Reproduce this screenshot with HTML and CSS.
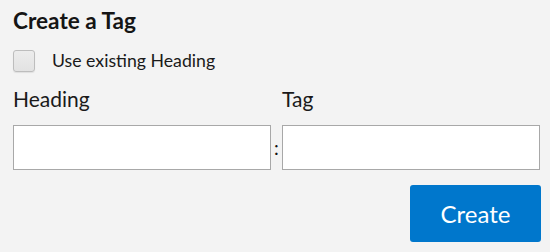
FILE: index.html
```html
<!DOCTYPE html>
<html>
<head>
<meta charset="utf-8">
<link rel="stylesheet" href="styles.css">
</head>
<body>
<div class="panel">
  <h2 class="title">Create a Tag</h2>
  <label class="check-row">
    <span class="checkbox"></span>
    <span class="check-label">Use existing Heading</span>
  </label>
  <div class="fields">
    <span class="field-label">Heading</span>
    <span></span>
    <span class="field-label">Tag</span>
    <span class="text-input"></span>
    <span class="colon">:</span>
    <span class="text-input"></span>
  </div>
  <div class="actions">
    <button class="create-btn">Create</button>
  </div>
</div>
</body>
</html>
```
FILE: styles.css
```css
html, body {
  margin: 0;
  padding: 0;
  background: #f3f3f3;
}
* {
  box-sizing: border-box;
}
body {
  font-family: Lato, "Open Sans", sans-serif;
  color: #111;
}
.panel {
  width: 540px;
  padding: 7px 0 0 13px;
}
.title {
  margin: 0;
  font-size: 22.6px;
  font-weight: 700;
  line-height: 28px;
  color: #151515;
}
.check-row {
  display: flex;
  align-items: center;
  margin-top: 15px;
  height: 22px;
}
.checkbox {
  width: 22px;
  height: 22px;
  border: 1px solid #bdbdbd;
  border-radius: 3px;
  background: linear-gradient(#ececec, #e2e2e2);
  box-shadow: 0 1px 1px rgba(0,0,0,0.08);
}
.check-label {
  margin-left: 17px;
  font-size: 17.7px;
  line-height: 22px;
  color: #1a1a1a;
}
.fields {
  display: grid;
  grid-template-columns: 258px 11px 258px;
  margin-top: 15px;
}
.field-label {
  font-size: 21px;
  line-height: 24px;
  height: 38px;
  color: #1a1a1a;
}
.text-input {
  display: block;
  height: 45px;
  border: 1px solid #a8a8a8;
  background: #fff;
}
.colon {
  display: flex;
  align-items: center;
  justify-content: center;
  font-size: 19px;
  color: #111;
}
.actions {
  display: flex;
  justify-content: flex-end;
  margin-top: 15px;
  margin-right: -1px;
}
.create-btn {
  width: 131px;
  height: 57px;
  border: none;
  border-radius: 3px;
  background: #0077cc;
  color: #fff;
  font-family: Lato, "Open Sans", sans-serif;
  font-size: 24px;
  padding: 0;
}
```
